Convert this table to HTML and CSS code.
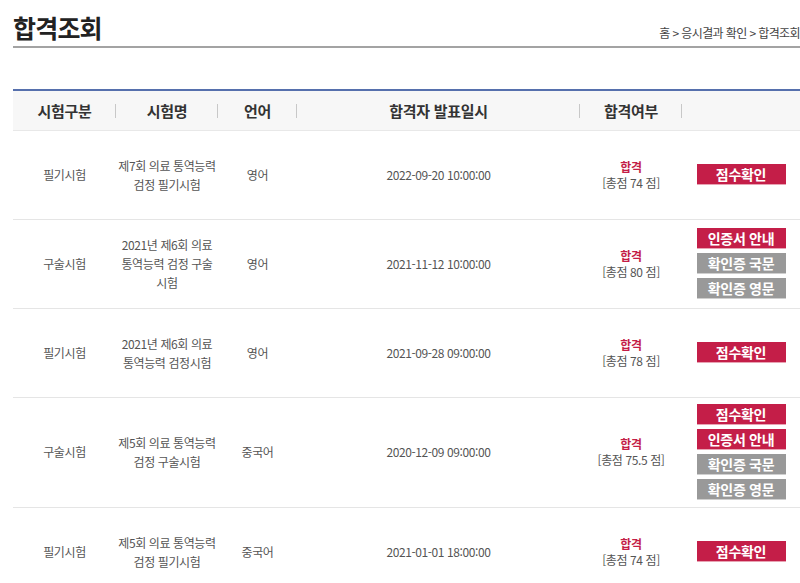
FILE: index.html
```html
<!DOCTYPE html>
<html lang="ko">
<head>
<meta charset="utf-8">
<link rel="stylesheet" href="styles.css">
</head>
<body>
<div class="page">
  <div class="title-bar">
    <h1 class="title">합격조회</h1>
    <div class="crumb">홈 &gt; 응시결과 확인 &gt; 합격조회</div>
  </div>
  <table class="result">
    <colgroup>
      <col class="c1"><col class="c2"><col class="c3"><col class="c4"><col class="c5"><col class="c6">
    </colgroup>
    <thead>
      <tr>
        <th class="sep">시험구분</th>
        <th class="sep">시험명</th>
        <th class="sep">언어</th>
        <th class="sep">합격자 발표일시</th>
        <th class="sep">합격여부</th>
        <th></th>
      </tr>
    </thead>
    <tbody>
      <tr>
        <td>필기시험</td>
        <td class="name">제7회 의료 통역능력<br>검정 필기시험</td>
        <td>영어</td>
        <td>2022-09-20 10:00:00</td>
        <td><div class="pass">합격</div><div class="score">[총점 74 점]</div></td>
        <td><div class="btns"><span class="btn red">점수확인</span></div></td>
      </tr>
      <tr>
        <td>구술시험</td>
        <td class="name">2021년 제6회 의료<br>통역능력 검정 구술<br>시험</td>
        <td>영어</td>
        <td>2021-11-12 10:00:00</td>
        <td><div class="pass">합격</div><div class="score">[총점 80 점]</div></td>
        <td><div class="btns"><span class="btn red">인증서 안내</span><span class="btn gray">확인증 국문</span><span class="btn gray">확인증 영문</span></div></td>
      </tr>
      <tr>
        <td>필기시험</td>
        <td class="name">2021년 제6회 의료<br>통역능력 검정시험</td>
        <td>영어</td>
        <td>2021-09-28 09:00:00</td>
        <td><div class="pass">합격</div><div class="score">[총점 78 점]</div></td>
        <td><div class="btns"><span class="btn red">점수확인</span></div></td>
      </tr>
      <tr>
        <td>구술시험</td>
        <td class="name">제5회 의료 통역능력<br>검정 구술시험</td>
        <td>중국어</td>
        <td>2020-12-09 09:00:00</td>
        <td><div class="pass">합격</div><div class="score">[총점 75.5 점]</div></td>
        <td><div class="btns"><span class="btn red">점수확인</span><span class="btn red">인증서 안내</span><span class="btn gray">확인증 국문</span><span class="btn gray">확인증 영문</span></div></td>
      </tr>
      <tr>
        <td>필기시험</td>
        <td class="name">제5회 의료 통역능력<br>검정 필기시험</td>
        <td>중국어</td>
        <td>2021-01-01 18:00:00</td>
        <td><div class="pass">합격</div><div class="score">[총점 74 점]</div></td>
        <td><div class="btns"><span class="btn red">점수확인</span></div></td>
      </tr>
    </tbody>
  </table>
</div>
</body>
</html>
```
FILE: styles.css
```css
html, body {
  margin: 0;
  padding: 0;
  background: #fff;
}
body {
  font-family: "Noto Sans CJK KR", "Noto Sans", sans-serif;
  color: #555;
  overflow: hidden;
}
.page {
  margin-left: 13px;
  width: 787px;
}
.title-bar {
  display: flex;
  justify-content: space-between;
  align-items: flex-end;
  height: 46px;
  border-bottom: 2px solid #a3a3a3;
  box-sizing: content-box;
}
.title {
  margin: 0;
  font-size: 25px;
  font-weight: 700;
  color: #222;
  line-height: 30px;
  padding-bottom: 4px;
  letter-spacing: -0.8px;
}
.crumb {
  font-size: 12px;
  color: #444;
  line-height: 14px;
  padding-bottom: 6px;
  letter-spacing: -0.6px;
}
.result {
  margin-top: 41px;
  width: 787px;
  border-collapse: collapse;
  table-layout: fixed;
  border-top: 2px solid #5670ad;
}
.c1 { width: 103px; }
.c2 { width: 102px; }
.c3 { width: 79px; }
.c4 { width: 283px; }
.c5 { width: 102px; }
.c6 { width: 118px; }
th {
  background: #f7f7f7;
  height: 39px;
  padding: 0;
  font-size: 15px;
  font-weight: 700;
  color: #333;
  border-bottom: 1px solid #e8e8e8;
  position: relative;
  letter-spacing: -0.3px;
}
th.sep::after {
  content: "";
  position: absolute;
  right: 0;
  top: 13px;
  width: 1px;
  height: 14px;
  background: #c8c8c8;
}
td {
  height: 75px;
  padding: 6px 0 7px;
  text-align: center;
  vertical-align: middle;
  font-size: 12px;
  line-height: 18px;
  color: #555;
  border-bottom: 1px solid #e5e5e5;
  letter-spacing: -0.4px;
}
td.name {
  line-height: 19px;
}
.pass {
  color: #c41e48;
  font-weight: 700;
  line-height: 16px;
}
.score {
  line-height: 16px;
}
.btns {
  display: flex;
  flex-direction: column;
  align-items: center;
  gap: 4px;
}
.btn {
  display: block;
  width: 89px;
  height: 21px;
  font-size: 14px;
  font-weight: 700;
  color: #fff;
  letter-spacing: -0.3px;
  box-sizing: border-box;
  line-height: 20px;
}
.btn.red {
  background: #c41e48;
  border-bottom: 1px solid #e8a3b3;
}
.btn.gray {
  background: #999;
  border-bottom: 1px solid #cfcfcf;
}
```
